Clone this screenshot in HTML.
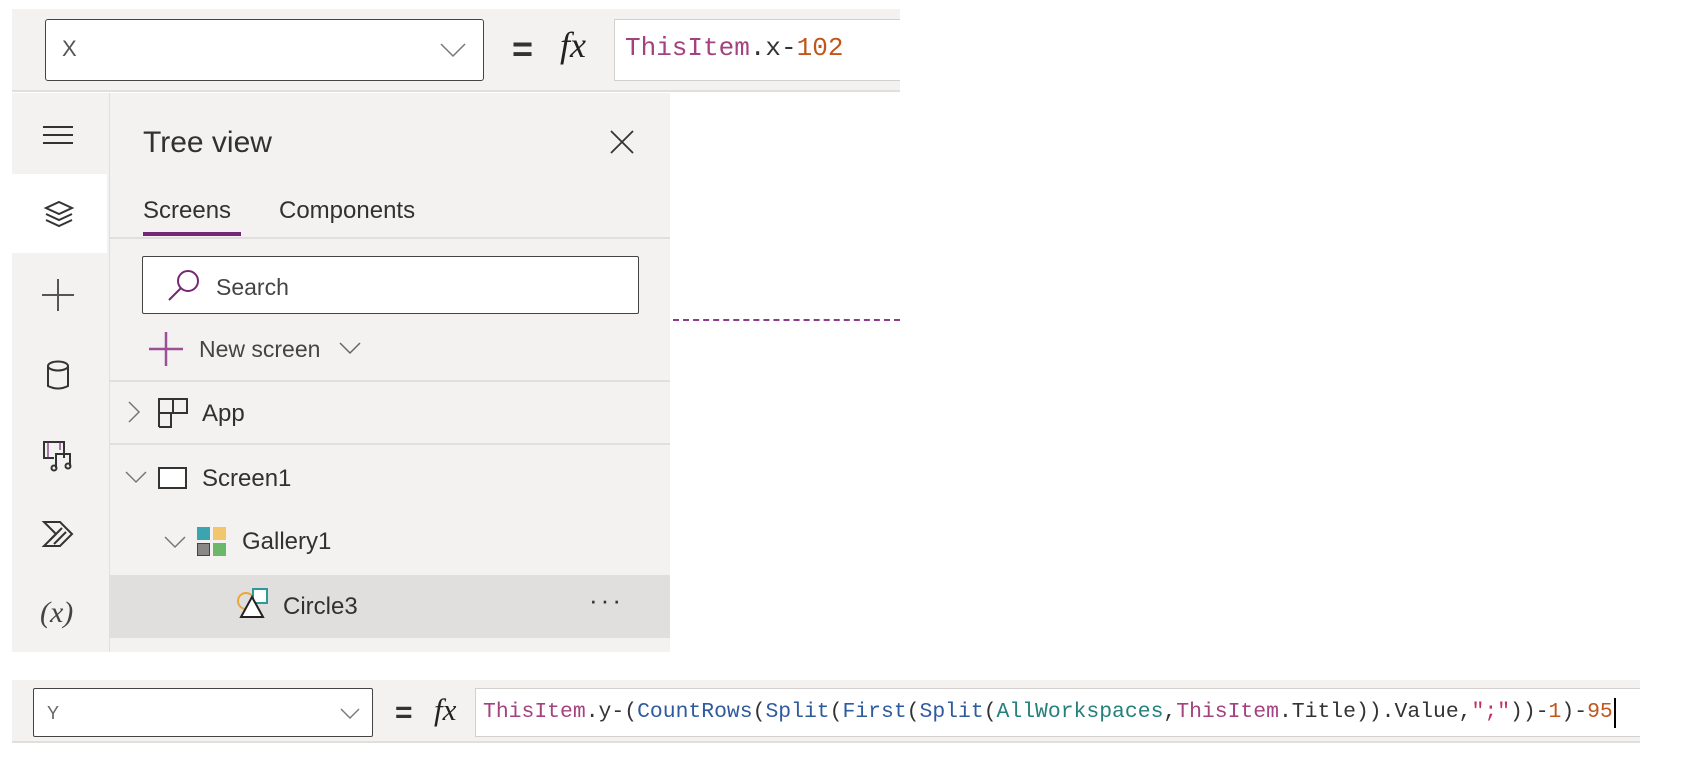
<!DOCTYPE html>
<html><head><meta charset="utf-8"><style>
*{margin:0;padding:0;box-sizing:border-box}
body{width:1696px;height:760px;background:#fff;position:relative;overflow:hidden;font-family:"Liberation Sans",sans-serif;color:#323130}
.a{position:absolute}
.mono{font-family:"Liberation Mono",monospace}
svg{position:absolute;overflow:visible}
</style></head><body>
<!-- top bar -->
<div class="a" style="left:12px;top:9px;width:888px;height:83px;background:#f3f2f1;border-bottom:2px solid #e1dfdd"></div>
<div class="a" style="left:45px;top:19px;width:439px;height:62px;background:#fff;border:1.5px solid #444;border-radius:3px"></div>
<div class="a" style="left:62px;top:36px;font-size:22px;color:#555">X</div>
<svg style="left:440px;top:42px" width="26" height="16"><path d="M1 2 L13 14 L25 2" fill="none" stroke="#777" stroke-width="1.5"/></svg>
<div class="a" style="left:512px;top:28px;font-size:36px;font-weight:bold;color:#333">=</div>
<div class="a" style="left:560px;top:24px;font-size:36px;font-family:'Liberation Serif',serif;font-style:italic;color:#222">fx</div>
<div class="a" style="left:614px;top:19px;width:286px;height:62px;background:#fff;border:1.5px solid #d2d0ce;border-right:none"></div>
<div class="a mono" style="left:625px;top:33px;font-size:26px;color:#333;white-space:pre"><span style="color:#a3427f">ThisItem</span>.x-<span style="color:#c0561d">102</span></div>

<!-- left rail -->
<div class="a" style="left:12px;top:93px;width:97px;height:559px;background:#f3f2f1"></div>
<div class="a" style="left:12px;top:174px;width:95px;height:79px;background:#fff"></div>
<svg style="left:42px;top:125px" width="32" height="20"><path d="M1 2H31M1 10H31M1 18H31" stroke="#333" stroke-width="2"/></svg>
<svg style="left:44px;top:200px" width="30" height="30"><g fill="none" stroke="#333" stroke-width="2"><path d="M15 2 L28 8 L15 14 L2 8Z"/><path d="M2 14 L15 20 L28 14"/><path d="M2 20 L15 26 L28 20"/></g></svg>
<svg style="left:42px;top:279px" width="32" height="32"><path d="M16 0V32M0 16H32" stroke="#555" stroke-width="2"/></svg>
<svg style="left:46px;top:360px" width="24" height="32"><g fill="none" stroke="#333" stroke-width="2"><ellipse cx="12" cy="6" rx="10" ry="4.5"/><path d="M2 6V26Q12 31 22 26V6"/></g></svg>
<svg style="left:42px;top:440px" width="32" height="32"><g fill="none" stroke="#333" stroke-width="2"><path d="M22 18V2H2V18H12"/><path d="M6 2V18M18 2V10" stroke="#742774" stroke-width="1.2"/><path d="M14 28V14H28V26"/><circle cx="12" cy="28" r="2.5"/><circle cx="26" cy="26" r="2.5"/></g></svg>
<svg style="left:42px;top:520px" width="32" height="28"><g fill="none" stroke="#333" stroke-width="2"><path d="M2 2H18L30 14L18 26H2L14 14Z"/><path d="M8 20L20 8M12 24L24 12"/></g></svg>
<div class="a" style="left:40px;top:596px;font-size:30px;font-family:'Liberation Serif',serif;color:#444"><i>(x)</i></div>

<!-- tree panel -->
<div class="a" style="left:109px;top:93px;width:561px;height:559px;background:#f3f2f1;border-left:1px solid #e1dfdd"></div>
<div class="a" style="left:143px;top:126px;font-size:30px;color:#323130">Tree view</div>
<svg style="left:610px;top:130px" width="24" height="24"><path d="M1 1L23 23M23 1L1 23" stroke="#333" stroke-width="1.8"/></svg>
<div class="a" style="left:143px;top:197px;font-size:24px;color:#323130">Screens</div>
<div class="a" style="left:279px;top:197px;font-size:24px;color:#323130">Components</div>
<div class="a" style="left:143px;top:232px;width:98px;height:4px;background:#742774"></div>
<div class="a" style="left:109px;top:237px;width:561px;height:2px;background:#e1dfdd"></div>
<div class="a" style="left:142px;top:256px;width:497px;height:58px;background:#fff;border:1.5px solid #444;border-radius:2px"></div>
<svg style="left:167px;top:269px" width="34" height="34"><g fill="none" stroke="#742774" stroke-width="2"><circle cx="21" cy="12" r="10"/><path d="M14 19L2 31" stroke="#742774"/></g></svg>
<div class="a" style="left:216px;top:274px;font-size:23px;color:#444">Search</div>
<svg style="left:149px;top:332px" width="34" height="34"><path d="M17 0V34M0 17H34" stroke="#9b4f96" stroke-width="2.5"/></svg>
<div class="a" style="left:199px;top:336px;font-size:23px;color:#444">New screen</div>
<svg style="left:339px;top:342px" width="22" height="13"><path d="M1 1L11 11L21 1" fill="none" stroke="#666" stroke-width="1.5"/></svg>
<div class="a" style="left:109px;top:380px;width:561px;height:2px;background:#e1dfdd"></div>
<!-- App -->
<svg style="left:128px;top:401px" width="12" height="22"><path d="M1 1L11 11L1 21" fill="none" stroke="#777" stroke-width="1.5"/></svg>
<svg style="left:158px;top:398px" width="30" height="30"><g fill="none" stroke="#333" stroke-width="2"><path d="M1 29V1H29V15H1M15 1V15M13 15V29H1"/></g></svg>
<div class="a" style="left:202px;top:400px;font-size:24px;color:#323130">App</div>
<div class="a" style="left:109px;top:443px;width:561px;height:2px;background:#e1dfdd"></div>
<!-- Screen1 -->
<svg style="left:125px;top:471px" width="22" height="13"><path d="M1 1L11 11L21 1" fill="none" stroke="#777" stroke-width="1.5"/></svg>
<div class="a" style="left:158px;top:467px;width:29px;height:22px;border:2px solid #333;background:#fff"></div>
<div class="a" style="left:202px;top:465px;font-size:24px;color:#323130">Screen1</div>
<!-- Gallery1 -->
<svg style="left:164px;top:536px" width="22" height="13"><path d="M1 1L11 11L21 1" fill="none" stroke="#777" stroke-width="1.5"/></svg>
<div class="a" style="left:197px;top:527px;width:13px;height:13px;background:#3aa5b0"></div>
<div class="a" style="left:213px;top:527px;width:13px;height:13px;background:#f2c66d"></div>
<div class="a" style="left:197px;top:543px;width:13px;height:13px;background:#888;border:1px solid #444"></div>
<div class="a" style="left:213px;top:543px;width:13px;height:13px;background:#6bb86a"></div>
<div class="a" style="left:242px;top:528px;font-size:24px;color:#323130">Gallery1</div>
<!-- Circle3 -->
<div class="a" style="left:110px;top:575px;width:560px;height:63px;background:#e1dfdd"></div>
<svg style="left:236px;top:587px" width="34" height="34"><g fill="none" stroke-width="2"><circle cx="10" cy="14" r="8" stroke="#e8a83a"/><rect x="17" y="2" width="14" height="14" stroke="#2b9a9a" fill="#fff"/><path d="M16 10L27 30H5Z" stroke="#222" fill="#fff"/></g></svg>
<div class="a" style="left:283px;top:593px;font-size:24px;color:#323130">Circle3</div>
<div class="a" style="left:589px;top:585px;font-size:26px;color:#333;letter-spacing:3px">···</div>

<!-- dashed line -->
<div class="a" style="left:673px;top:319px;width:227px;height:0;border-top:2px dashed #8a3c8a"></div>

<!-- bottom bar -->
<div class="a" style="left:12px;top:680px;width:1628px;height:63px;background:#f3f2f1;border-bottom:2px solid #e1dfdd"></div>
<div class="a" style="left:33px;top:688px;width:340px;height:49px;background:#fff;border:1.5px solid #444;border-radius:2px"></div>
<div class="a" style="left:47px;top:703px;font-size:18px;color:#666">Y</div>
<svg style="left:340px;top:708px" width="20" height="12"><path d="M1 1L10 10L19 1" fill="none" stroke="#777" stroke-width="1.4"/></svg>
<div class="a" style="left:395px;top:696px;font-size:30px;font-weight:bold;color:#333">=</div>
<div class="a" style="left:434px;top:692px;font-size:31px;font-family:'Liberation Serif',serif;font-style:italic;color:#222">fx</div>
<div class="a" style="left:475px;top:688px;width:1165px;height:49px;background:#fff;border:1.5px solid #d2d0ce;border-right:none"></div>
<div class="a mono" style="left:483px;top:700px;font-size:21.4px;color:#333;white-space:pre"><span style="color:#a3427f">ThisItem</span>.y-(<span style="color:#2e5a9e">CountRows</span>(<span style="color:#2e5a9e">Split</span>(<span style="color:#2e5a9e">First</span>(<span style="color:#2e5a9e">Split</span>(<span style="color:#23807a">AllWorkspaces</span>,<span style="color:#a3427f">ThisItem</span>.Title)).Value,<span style="color:#c2306a">";"</span>))-<span style="color:#c0561d">1</span>)-<span style="color:#c0561d">95</span></div>
<div class="a" style="left:1614px;top:698px;width:2px;height:30px;background:#000"></div>
</body></html>
